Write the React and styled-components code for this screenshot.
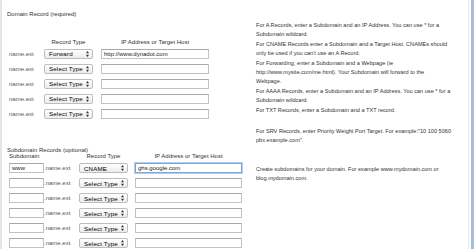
import React from 'react';
import styled, { createGlobalStyle } from 'styled-components';

const GlobalStyle = createGlobalStyle`
  html, body {
    margin: 0;
    padding: 0;
    background: #ffffff;
  }
  body {
    font-family: "Liberation Sans", Arial, sans-serif;
    color: #333333;
  }
`;

const Frame = styled.div`
  width: 474px;
  height: 249px;
  box-sizing: border-box;
  overflow: hidden;
  border-left: 2px solid #e6e6e6;
  border-right: 3px solid #aabcd3;
  box-shadow: inset -2px 0 0 #ffffff, inset -3px 0 0 #e4e9f0;
  padding-top: 10px;
`;

const Section = styled.div`
  display: grid;
  grid-template-columns: 252px 1fr;
  align-items: start;
`;

const Title = styled.div`
  font-size: 6px;
  line-height: 9px;
  height: 9px;
  padding-left: 5px;
  color: #333;
  white-space: nowrap;
`;

const Table = styled.div`
  display: grid;
  grid-template-columns: ${(p) => p.$cols};
  grid-auto-rows: 10px;
  row-gap: 5px;
  padding-left: 7px;
  margin-top: ${(p) => p.$top}px;
  align-items: center;
`;

const Row = styled.div`
  display: contents;
`;

const Head = styled.div`
  font-size: 6px;
  line-height: 9px;
  height: 9px;
  align-self: start;
  margin-top: 4px;
  color: #333;
  white-space: nowrap;
  text-align: ${(p) => p.$align || 'center'};
`;

const Label = styled.div`
  font-size: 6px;
  line-height: 10px;
  color: #555;
  white-space: nowrap;
`;

const SelectBox = styled.div`
  box-sizing: border-box;
  width: 49px;
  height: 10px;
  display: flex;
  align-items: center;
  justify-content: space-between;
  padding: 0 3px 0 4px;
  border: 1px solid #bdbdbd;
  border-radius: 2px;
  background: linear-gradient(#ffffff, #ececec);
  font-size: 6.2px;
  letter-spacing: 0.15px;
  color: #000;
  white-space: nowrap;
`;

const TextBox = styled.div`
  box-sizing: border-box;
  width: ${(p) => p.$w}px;
  height: 10px;
  border: 1px solid ${(p) => (p.$focus ? '#7ea5d8' : '#c2c2c2')};
  border-top-color: ${(p) => (p.$focus ? '#7ea5d8' : '#a8a8a8')};
  box-shadow: ${(p) => (p.$focus ? '0 0 0 1px #b4cdee' : 'none')};
  background: #fff;
  font-size: 6px;
  line-height: 8px;
  padding-left: 2px;
  color: #222;
  white-space: nowrap;
`;

const Help = styled.div`
  margin-top: ${(p) => p.$top}px;
  padding-left: 2px;
  font-size: 5.6px;
  line-height: 9px;
  color: #333;
  white-space: nowrap;
`;

const Para = styled.p`
  margin: 0 0 ${(p) => p.$after ?? 1}px;
`;

function Arrows() {
  return (
    <svg width="3" height="6" viewBox="0 0 3 6">
      <path d="M1.5 0 L3 2.2 L0 2.2 Z M1.5 6 L3 3.8 L0 3.8 Z" fill="#333" />
    </svg>
  );
}

function Select({ value }) {
  return (
    <SelectBox>
      <span>{value}</span>
      <Arrows />
    </SelectBox>
  );
}

const domainRows = ['Forward', 'Select Type', 'Select Type', 'Select Type', 'Select Type'];
const subRows = [
  { sub: 'www', type: 'CNAME', host: 'ghs.google.com', focus: true },
  { sub: '', type: 'Select Type', host: '' },
  { sub: '', type: 'Select Type', host: '' },
  { sub: '', type: 'Select Type', host: '' },
  { sub: '', type: 'Select Type', host: '' },
  { sub: '', type: 'Select Type', host: '' },
];

export default function App() {
  return (
    <>
      <GlobalStyle />
      <Frame>
        <Section>
          <div>
            <Title>Domain Record (required)</Title>
            <Table $cols="35px 49px 8px 108px" $top={14.5}>
              <Row>
                <Head />
                <Head>Record Type</Head>
                <Head />
                <Head>IP Address or Target Host</Head>
              </Row>
              {domainRows.map((t, i) => (
                <Row key={i}>
                  <Label>name.ext</Label>
                  <Select value={t} />
                  <span />
                  <TextBox $w={108}>{i === 0 ? 'http://www.dynadot.com' : ''}</TextBox>
                </Row>
              ))}
            </Table>
          </div>
          <Help $top={10.5}>
            <Para>
              For A Records, enter a Subdomain and an IP Address. You can use * for a
              <br />
              Subdomain wildcard.
            </Para>
            <Para>
              For CNAME Records enter a Subdomain and a Target Host. CNAMEs should
              <br />
              only be used if you can't use an A Record.
            </Para>
            <Para>
              For Forwarding, enter a Subdomain and a Webpage (ie
              <br />
              http://www.mysite.com/me.html). Your Subdomain will forward to the
              <br />
              Webpage.
            </Para>
            <Para>
              For AAAA Records, enter a Subdomain and an IP Address. You can use * for a
              <br />
              Subdomain wildcard.
            </Para>
            <Para $after={12}>For TXT Records, enter a Subdomain and a TXT record.</Para>
            <Para>
              For SRV Records, enter Priority Weight Port Target. For example:"10 100 5060
              <br />
              pbx.example.com".
            </Para>
          </Help>
        </Section>
        <Section>
          <div>
            <Title>Subdomain Records (optional)</Title>
            <Table $cols="35px 35px 49px 7px 107px" $top={-6.5}>
              <Row>
                <Head $align="left">Subdomain</Head>
                <Head />
                <Head>Record Type</Head>
                <Head />
                <Head>IP Address or Target Host</Head>
              </Row>
              {subRows.map((r, i) => (
                <Row key={i}>
                  <TextBox $w={35}>{r.sub}</TextBox>
                  <Label>.name.ext</Label>
                  <Select value={r.type} />
                  <span />
                  <TextBox $w={107} $focus={r.focus}>{r.host}</TextBox>
                </Row>
              ))}
            </Table>
          </div>
          <Help $top={19}>
            <Para>
              Create subdomains for your domain. For example www.mydomain.com or
              <br />
              blog.mydomain.com.
            </Para>
          </Help>
        </Section>
      </Frame>
    </>
  );
}
